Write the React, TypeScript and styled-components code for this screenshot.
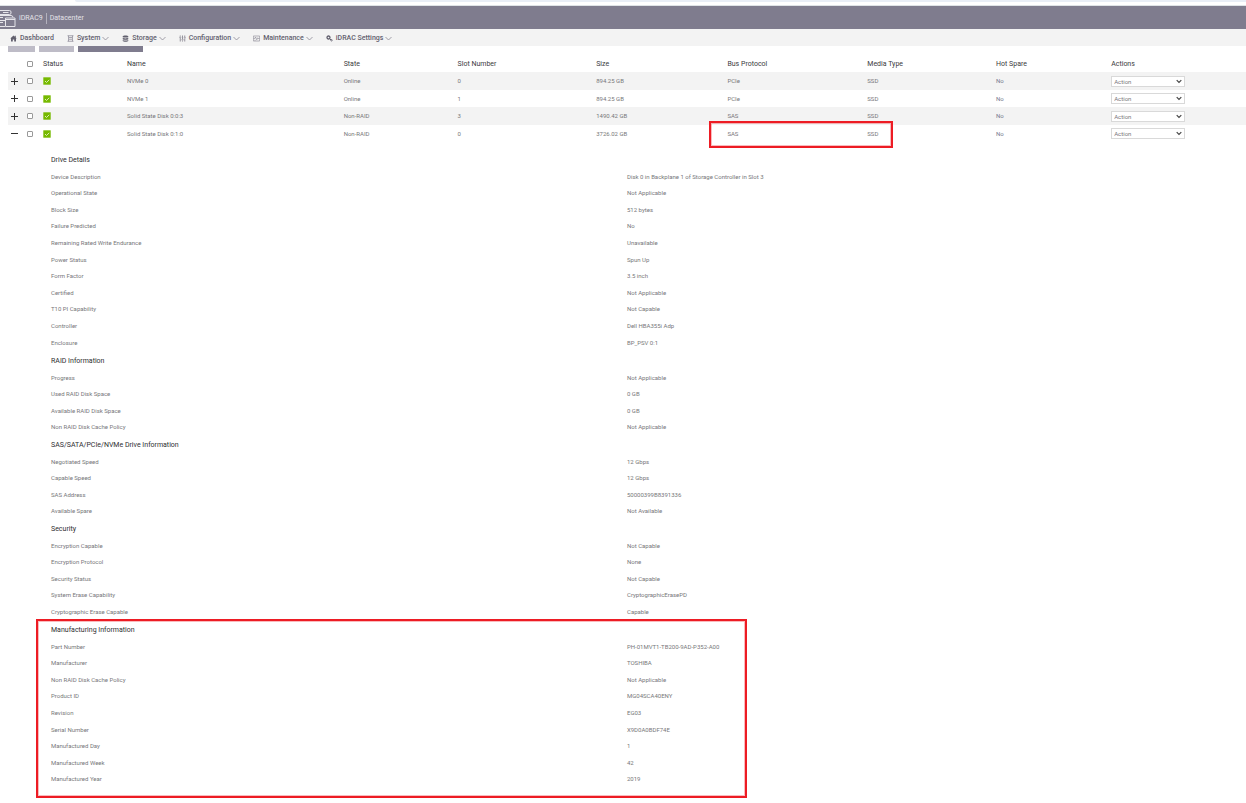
import React from "react";
import styled, { createGlobalStyle } from "styled-components";

const GlobalStyle = createGlobalStyle`
  * { box-sizing: border-box; }
  html, body { margin: 0; padding: 0; background: #ffffff; }
  body {
    font-family: Roboto, "Liberation Sans", sans-serif;
    font-size: 6px;
    line-height: 8px;
    color: #77777a;
  }
  button, select, input { font: inherit; margin: 0; }
`;

const Page = styled.div`
  display: flex;
  flex-direction: column;
  min-height: 100vh;
`;

const BrowserEdge = styled.div`
  height: 6px;
  padding-left: 75px;
  border-bottom: 1px solid #dfe3e6;
  &::before {
    content: "";
    display: block;
    height: 2px;
    background: #e9eef6;
    border-bottom-left-radius: 2px;
  }
`;

const Header = styled.header`
  display: flex;
  align-items: center;
  height: 23px;
  padding-top: 1px;
  background: #7f7c8e;
  color: #e4e3e9;
  font-size: 7px;
  line-height: 11px;
`;

const Logo = styled.svg`
  width: 16px;
  height: 19px;
  flex: none;
  margin-right: 3px;
`;

const Product = styled.span`
  padding-right: 3px;
  border-right: 1px solid #b4b2be;
`;

const Edition = styled.span`
  padding-left: 3px;
`;

const Nav = styled.nav`
  display: flex;
  align-items: center;
  gap: 13px;
  height: 17px;
  padding: 1px 0 0 10px;
  background: #f3f3f3;
`;

const NavItem = styled.button`
  display: flex;
  align-items: center;
  gap: 3px;
  padding: 0;
  border: 0;
  background: none;
  color: #62606e;
  font-size: 7px;
  line-height: 9px;
  font-weight: 500;
`;

const NavIcon = styled.svg`
  width: 7px;
  height: 7px;
  flex: none;
`;

const NavChevron = styled.svg`
  width: 7px;
  height: 5px;
  flex: none;
  margin-left: -1px;
`;

const Tabs = styled.div`
  display: flex;
  gap: 4px;
  height: 6px;
  padding-left: 8px;
`;

const Tab = styled.button<{ $width: number; $active?: boolean }>`
  flex: none;
  width: ${(p) => p.$width}px;
  padding: 0;
  border: 0;
  background: ${(p) => (p.$active ? "#7f7c8e" : "#bebcc7")};
`;

const Main = styled.main`
  padding: 3px 0 0 8px;
`;

const DiskTable = styled.table`
  width: 100%;
  table-layout: fixed;
  border-collapse: collapse;
`;

const HeadCell = styled.th`
  height: 17px;
  padding: 0;
  text-align: left;
  vertical-align: middle;
  font-size: 7px;
  font-weight: 400;
  color: #3a3a3d;
`;

const DiskRow = styled.tr`
  height: 18px;
  &:nth-child(odd) { background: #f3f3f3; }
  &:nth-child(even) { height: 17px; background: #ffffff; }
`;

const Cell = styled.td`
  position: relative;
  padding: 0;
  vertical-align: middle;
  white-space: nowrap;
`;

const HotSpareCell = styled(Cell)`
  color: #76798e;
`;

const Expand = styled.button`
  display: flex;
  align-items: center;
  width: 13px;
  height: 9px;
  padding: 0 0 0 3px;
  border: 0;
  background: none;
  color: #333333;
`;

const Check = styled.input`
  appearance: none;
  display: block;
  width: 6px;
  height: 6px;
  border: 1px solid #999999;
  border-radius: 1px;
  background: #ffffff;
`;

const StatusIcon = styled.svg`
  display: block;
  width: 8px;
  height: 8px;
`;

const SelectBox = styled.label`
  position: relative;
  display: block;
  width: 74px;
  height: 11px;
`;

const ActionSelect = styled.select`
  appearance: none;
  display: block;
  width: 100%;
  height: 100%;
  padding: 1px 2px 0;
  border: 1px solid #d9d9d9;
  border-radius: 0;
  background: #ffffff;
  color: #77777a;
  font-size: 6px;
  line-height: 8px;
`;

const SelectArrow = styled.svg`
  position: absolute;
  right: 3px;
  top: 3px;
  width: 6px;
  height: 5px;
  pointer-events: none;
`;

const BusHighlight = styled.span`
  position: absolute;
  left: -18px;
  right: -26px;
  top: -4px;
  height: 27px;
  border: 2px solid #ed1c24;
  outline: 1px solid rgba(237, 28, 36, 0.3);
  outline-offset: -3px;
  pointer-events: none;
`;

const DetailCell = styled.td`
  padding: 9px 0 0 43px;
`;

const Section = styled.section`
  position: relative;
  padding-bottom: 1px;
`;

const SectionTitle = styled.h2`
  margin: 0;
  height: 17px;
  font-size: 7px;
  line-height: 19px;
  font-weight: 400;
  color: #2e2e30;
`;

const DetailTable = styled.table`
  width: 100%;
  table-layout: fixed;
  border-collapse: collapse;
`;

const DetailRow = styled.tr`
  height: 17px;
  &:nth-child(5n + 2), &:nth-child(5n + 4) { height: 16px; }
`;

const DetailName = styled.th`
  width: 48.2%;
  padding: 0;
  text-align: left;
  vertical-align: middle;
  font-weight: 400;
`;

const SectionHighlight = styled.div`
  position: absolute;
  left: -15px;
  top: -2px;
  bottom: -10px;
  width: 59.5%;
  border: 2px solid #ed1c24;
  outline: 1px solid rgba(237, 28, 36, 0.3);
  outline-offset: -3px;
  pointer-events: none;
`;

type IconName = "home" | "system" | "storage" | "config" | "maintenance" | "settings";

const iconShapes: Record<IconName, React.ReactNode> = {
  home: (
    <path fill="#62606e" d="M7 1 0.5 7H2v6h3.6V9h2.8v4H12V7h1.5L11.5 5V1.5h-2v1.8z" />
  ),
  system: (
    <g fill="none" stroke="#858390" strokeWidth="1.4">
      <path d="M1 1.5h12M1 12.5h12M3 1.5v11M11 1.5v11M4 5h6M4 8.5h6" />
    </g>
  ),
  storage: (
    <g fill="#62606e">
      <path d="M1.5 2.2C1.5 .4 12.5 .4 12.5 2.2v1.6c0 1.8-11 1.8-11 0z" />
      <path d="M1.5 5.6c2 1.6 9 1.6 11 0v2.8c-1 1.6-10 1.6-11 0z" />
      <path d="M1.5 10c2 1.6 9 1.6 11 0v2.2c-1 1.9-10 1.9-11 0z" />
    </g>
  ),
  config: (
    <g fill="none" stroke="#74727f" strokeWidth="1.5">
      <path d="M2.5 1v2M2.5 6v7M7 1v7M7 11v2M11.5 1v3M11.5 7v6M.5 4.500h4M5 9.500h4M9.500 5.500h4" />
    </g>
  ),
  maintenance: (
    <g fill="none" stroke="#8b8995" strokeWidth="1.3">
      <path d="M.7 2h12.600v10H.7zM1 7h2.500l1.500-3 2.500 5.500 2-4 1 1.500H13M3 10.500h2" />
    </g>
  ),
  settings: (
    <g fill="none" stroke="#62606e">
      <circle cx="5" cy="5" r="3" strokeWidth="2.6" />
      <circle cx="11" cy="10.5" r="1.5" strokeWidth="1.6" />
      <path strokeWidth="2" d="M7.500 7.500 10 10" />
    </g>
  ),
};

const navItems: { icon: IconName; label: string; menu: boolean }[] = [
  { icon: "home", label: "Dashboard", menu: false },
  { icon: "system", label: "System", menu: true },
  { icon: "storage", label: "Storage", menu: true },
  { icon: "config", label: "Configuration", menu: true },
  { icon: "maintenance", label: "Maintenance", menu: true },
  { icon: "settings", label: "iDRAC Settings", menu: true },
];

const columns: { label: string; width?: string }[] = [
  { label: "Name", width: "17.5%" },
  { label: "State", width: "9.2%" },
  { label: "Slot Number", width: "11.2%" },
  { label: "Size", width: "10.6%" },
  { label: "Bus Protocol", width: "11.3%" },
  { label: "Media Type", width: "10.4%" },
  { label: "Hot Spare", width: "9.3%" },
  { label: "Actions" },
];

const disks = [
  { name: "NVMe 0", state: "Online", slot: "0", size: "894.25 GB", bus: "PCIe" },
  { name: "NVMe 1", state: "Online", slot: "1", size: "894.25 GB", bus: "PCIe" },
  { name: "Solid State Disk 0:0:3", state: "Non-RAID", slot: "3", size: "1490.42 GB", bus: "SAS" },
  { name: "Solid State Disk 0:1:0", state: "Non-RAID", slot: "0", size: "3726.02 GB", bus: "SAS", open: true },
];

const sections: { title: string; marked?: boolean; rows: [string, string][] }[] = [
  {
    title: "Drive Details",
    rows: [
      ["Device Description", "Disk 0 in Backplane 1 of Storage Controller in Slot 3"],
      ["Operational State", "Not Applicable"],
      ["Block Size", "512 bytes"],
      ["Failure Predicted", "No"],
      ["Remaining Rated Write Endurance", "Unavailable"],
      ["Power Status", "Spun Up"],
      ["Form Factor", "3.5 inch"],
      ["Certified", "Not Applicable"],
      ["T10 PI Capability", "Not Capable"],
      ["Controller", "Dell HBA355i Adp"],
      ["Enclosure", "BP_PSV 0:1"],
    ],
  },
  {
    title: "RAID Information",
    rows: [
      ["Progress", "Not Applicable"],
      ["Used RAID Disk Space", "0 GB"],
      ["Available RAID Disk Space", "0 GB"],
      ["Non RAID Disk Cache Policy", "Not Applicable"],
    ],
  },
  {
    title: "SAS/SATA/PCIe/NVMe Drive Information",
    rows: [
      ["Negotiated Speed", "12 Gbps"],
      ["Capable Speed", "12 Gbps"],
      ["SAS Address", "50000399B8391336"],
      ["Available Spare", "Not Available"],
    ],
  },
  {
    title: "Security",
    rows: [
      ["Encryption Capable", "Not Capable"],
      ["Encryption Protocol", "None"],
      ["Security Status", "Not Capable"],
      ["System Erase Capability", "CryptographicErasePD"],
      ["Cryptographic Erase Capable", "Capable"],
    ],
  },
  {
    title: "Manufacturing Information",
    marked: true,
    rows: [
      ["Part Number", "PH-01MVT1-TB200-9AD-P352-A00"],
      ["Manufacturer", "TOSHIBA"],
      ["Non RAID Disk Cache Policy", "Not Applicable"],
      ["Product ID", "MG04SCA40ENY"],
      ["Revision", "EG03"],
      ["Serial Number", "X9D0A0BDF74E"],
      ["Manufactured Day", "1"],
      ["Manufactured Week", "42"],
      ["Manufactured Year", "2019"],
    ],
  },
];

export default function App() {
  return (
    <Page>
      <GlobalStyle />
      <BrowserEdge />
      <Header>
        <Logo viewBox="0 0 16 19" fill="none" stroke="#e6e5ea" aria-hidden="true">
          <path d="M0 1.500h9.500q1.500 0 1.500 1.500v1q0 1.500-1.500 1.500H0M3 3.500h5.500M0 6.500h11q2 0 2 2M0 8.500h3M0 11.500h5M0 13.500h3M0 17.500h5" />
          <path d="M5.500 9h9.500v8.500H5.500z" fill="#7f7c8e" />
          <path d="M5.500 10.500H15" />
        </Logo>
        <Product>iDRAC9</Product>
        <Edition>Datacenter</Edition>
      </Header>
      <Nav>
        {navItems.map((item) => (
          <NavItem key={item.label} type="button">
            <NavIcon viewBox="0 0 14 14" aria-hidden="true">{iconShapes[item.icon]}</NavIcon>
            {item.label}
            {item.menu && (
              <NavChevron viewBox="0 0 7 5" fill="none" stroke="#8b8995" aria-hidden="true">
                <path d="M.5 1 3.500 4l3-3" strokeWidth=".8" />
              </NavChevron>
            )}
          </NavItem>
        ))}
      </Nav>
      <Tabs>
        <Tab type="button" $width={27} aria-label="First view" />
        <Tab type="button" $width={35} aria-label="Second view" />
        <Tab type="button" $width={65} $active aria-label="Current view" />
      </Tabs>
      <Main>
        <DiskTable>
          <colgroup>
            <col style={{ width: 19 }} />
            <col style={{ width: 16 }} />
            <col style={{ width: 84 }} />
            {columns.map((c) => (
              <col key={c.label} style={{ width: c.width }} />
            ))}
          </colgroup>
          <thead>
            <tr>
              <HeadCell />
              <HeadCell>
                <Check type="checkbox" aria-label="Select all disks" />
              </HeadCell>
              <HeadCell>Status</HeadCell>
              {columns.map((c) => (
                <HeadCell key={c.label}>{c.label}</HeadCell>
              ))}
            </tr>
          </thead>
          <tbody>
            {disks.map((d) => (
              <DiskRow key={d.name}>
                <Cell>
                  <Expand type="button" aria-expanded={!!d.open} aria-label={`Details of ${d.name}`}>
                    <svg width="7" height="7" viewBox="0 0 7 7" stroke="currentColor">
                      <path d={d.open ? "M0 3.500h7" : "M0 3.500h7M3.500 0v7"} />
                    </svg>
                  </Expand>
                </Cell>
                <Cell>
                  <Check type="checkbox" aria-label={`Select ${d.name}`} />
                </Cell>
                <Cell>
                  <StatusIcon viewBox="0 0 8 8" role="img" aria-label="OK">
                    <path fill="#76b900" d="M.3 .3h7.400v7.400h-7.400z" />
                    <path fill="none" stroke="#e4f2c8" strokeWidth=".9" d="M2 4l1.500 1.500L6.200 2.800" />
                  </StatusIcon>
                </Cell>
                <Cell>{d.name}</Cell>
                <Cell>{d.state}</Cell>
                <Cell>{d.slot}</Cell>
                <Cell>{d.size}</Cell>
                <Cell>
                  {d.bus}
                  {d.open && <BusHighlight />}
                </Cell>
                <Cell>SSD</Cell>
                <HotSpareCell>No</HotSpareCell>
                <Cell>
                  <SelectBox>
                    <ActionSelect aria-label={`Action for ${d.name}`}>
                      <option>Action</option>
                    </ActionSelect>
                    <SelectArrow viewBox="0 0 6 5" fill="none" stroke="#444444" aria-hidden="true">
                      <path d="M.7 1.200 3 3.500l2.300-2.300" strokeWidth="1.2" />
                    </SelectArrow>
                  </SelectBox>
                </Cell>
              </DiskRow>
            ))}
            <tr>
              <DetailCell colSpan={11}>
                {sections.map((s) => (
                  <Section key={s.title}>
                    <SectionTitle>{s.title}</SectionTitle>
                    <DetailTable>
                      <tbody>
                        {s.rows.map(([name, value]) => (
                          <DetailRow key={name}>
                            <DetailName scope="row">{name}</DetailName>
                            <Cell>{value}</Cell>
                          </DetailRow>
                        ))}
                      </tbody>
                    </DetailTable>
                    {s.marked && <SectionHighlight />}
                  </Section>
                ))}
              </DetailCell>
            </tr>
          </tbody>
        </DiskTable>
      </Main>
    </Page>
  );
}
